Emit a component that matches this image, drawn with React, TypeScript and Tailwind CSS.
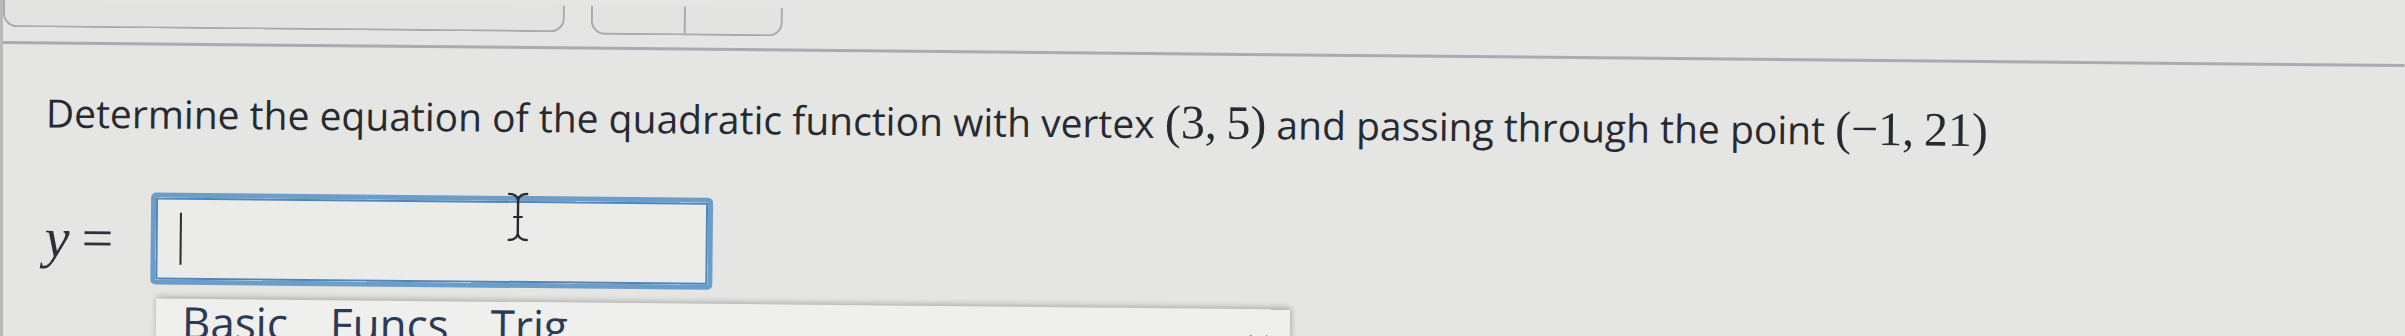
import React from "react";

function IBeam() {
  return (
    <svg width="24" height="52" viewBox="0 0 24 52" fill="none" stroke="#2a2a2e" strokeWidth="2.4" strokeLinecap="round">
      <path d="M3 3 C8 3 11 5 12 9 C13 5 16 3 21 3" />
      <path d="M12 9 V43" />
      <path d="M8 26 H16" strokeWidth="2" />
      <path d="M3 49 C8 49 11 47 12 43 C13 47 16 49 21 49" />
    </svg>
  );
}

export default function App() {
  return (
    <div className="relative h-[336px] w-[2405px] overflow-hidden border-l-[3px] border-[#b9b9b9] bg-[#e5e5e3] font-['Open_Sans',sans-serif]">
      <div className="origin-top-left rotate-[0.55deg]">
        {/* top toolbar buttons */}
        <div className="flex items-start gap-[26px]">
          <div className="h-[27px] w-[562px] rounded-b-[14px] border-2 border-t-0 border-[#a9a9b0] bg-[#e3e3e1]" />
          <div className="flex h-[29px] w-[192px] rounded-b-[14px] border-2 border-t-0 border-[#a9a9b0] bg-[#e3e3e1]">
            <div className="w-[93px] border-r-2 border-[#a9a9b0]" />
          </div>
        </div>
        <div className="mt-[12px] h-[3px] w-full bg-[#abaab2]" />

        {/* question */}
        <p className="mt-[42px] pl-[44px] text-[39px] leading-[50px] text-[#282a32]">
          Determine the equation of the quadratic function with vertex{" "}
          <span className="font-['Liberation_Serif',serif] text-[48px]">(3,&thinsp;5)</span> and passing through the point{" "}
          <span className="font-['Liberation_Serif',serif] text-[48px]">(−1,&thinsp;21)</span>
        </p>

        {/* answer */}
        <div className="mt-[54px] flex items-center pl-[44px]">
          <span className="flex items-center gap-[12px] font-['Liberation_Serif',serif] text-[56px] leading-none text-[#2e3038]">
            <span className="italic">y</span>
            <span>=</span>
          </span>
          <div className="relative ml-[38px] flex h-[92px] w-[562px] items-center rounded-[5px] border-[5px] border-[#6c9dc8] bg-[#ebebea] pl-[24px] shadow-[inset_0_0_0_2px_#4f86b8]">
            <div className="h-[52px] w-[2px] bg-[#2c2c30]" />
            <div className="absolute left-[350px] top-[-10px]">
              <IBeam />
            </div>
          </div>
        </div>

        {/* keypad panel */}
        <div className="ml-[156px] mt-[14px] flex h-[60px] w-[1134px] items-start justify-between bg-[#efefee] pl-[26px] pr-[20px] pt-[1px] shadow-[0_-2px_6px_rgba(0,0,0,0.18),2px_0_6px_rgba(0,0,0,0.12)]">
          <div className="flex gap-[42px] font-['Open_Sans',sans-serif] text-[44px] leading-none text-[#2d3a55]">
            <span>Basic</span>
            <span>Funcs</span>
            <span>Trig</span>
          </div>
          <svg width="22" height="14" viewBox="0 0 22 14" className="mt-[24px]" fill="none" stroke="#2d2d33" strokeWidth="3">
            <path d="M2 2 L11 12 L20 2" />
          </svg>
        </div>
      </div>
    </div>
  );
}
